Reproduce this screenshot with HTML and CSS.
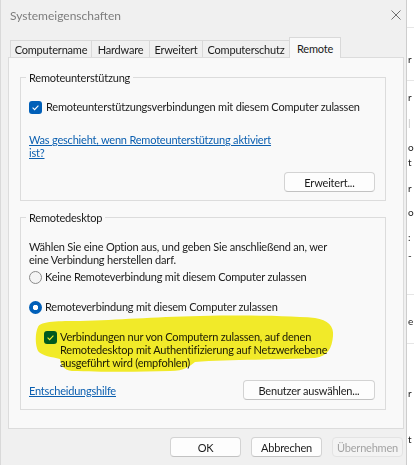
FILE: index.html
```html
<!DOCTYPE html>
<html lang="de">
<head>
<meta charset="utf-8">
<title>Systemeigenschaften</title>
<link rel="stylesheet" href="styles.css">
</head>
<body>
<div class="screen">
  <div class="dialog">
    <div class="titlebar">
      <span class="title">Systemeigenschaften</span>
      <svg class="close" width="10" height="10" viewBox="0 0 10 10"><path d="M0.5 0.5 L9.5 9.5 M9.5 0.5 L0.5 9.5" stroke="#6f6f6f" stroke-width="1" fill="none"/></svg>
    </div>
    <div class="tabs">
      <div class="tab tab-name">Computername</div>
      <div class="tab tab-hw">Hardware</div>
      <div class="tab tab-adv">Erweitert</div>
      <div class="tab tab-prot">Computerschutz</div>
      <div class="tab tab-remote active">Remote</div>
    </div>
    <div class="panel">
      <fieldset class="group group-assist">
        <legend>Remoteunterstützung</legend>
        <div class="option assist-check">
          <svg class="cb" width="13" height="13" viewBox="0 0 13 13"><rect width="13" height="13" rx="3" fill="#005fb8"/><path d="M3.6 6.7 L5.6 8.6 L9.4 4.6" fill="none" stroke="#fff" stroke-width="1.1"/></svg>
          <span>Remoteunterstützungsverbindungen mit diesem Computer zulassen</span>
        </div>
        <a class="link assist-link" href="#">Was geschieht, wenn Remoteunterstützung aktiviert<br>ist?</a>
        <div class="btnrow">
          <button class="btn btn-adv">Erweitert...</button>
        </div>
      </fieldset>
      <fieldset class="group group-desktop">
        <legend>Remotedesktop</legend>
        <p class="intro">Wählen Sie eine Option aus, und geben Sie anschließend an, wer<br>eine Verbindung herstellen darf.</p>
        <div class="option radio-none">
          <span class="radio"></span>
          <span>Keine Remoteverbindung mit diesem Computer zulassen</span>
        </div>
        <div class="option radio-allow">
          <span class="radio checked"></span>
          <span>Remoteverbindung mit diesem Computer zulassen</span>
        </div>
        <div class="option nla">
          <svg class="cb" width="13" height="13" viewBox="0 0 13 13"><rect width="13" height="13" rx="3" fill="#005fb8"/><path d="M3.6 6.7 L5.6 8.6 L9.4 4.6" fill="none" stroke="#fff" stroke-width="1.1"/></svg>
          <span>Verbindungen nur von Computern zulassen, auf denen<br>Remotedesktop mit Authentifizierung auf Netzwerkebene<br>ausgeführt wird (empfohlen)</span>
        </div>
        <div class="actions">
          <a class="link" href="#">Entscheidungshilfe</a>
          <button class="btn btn-users">Benutzer auswählen...</button>
        </div>
      </fieldset>
    </div>
    <div class="footer">
      <button class="btn btn-foot">OK</button>
      <button class="btn btn-foot">Abbrechen</button>
      <button class="btn btn-foot disabled">Übernehmen</button>
    </div>
  </div>
  <div class="strip">
    <div class="strip-line l1"></div>
    <div class="frag f-r1">r</div>
    <div class="strip-line l2"></div>
    <div class="frag f-r2">r</div>
    <div class="frag f-bar">|</div>
    <div class="frag f-o1">o</div>
    <div class="frag f-t1">t</div>
    <div class="frag f-r3">r</div>
    <div class="frag f-o2">o</div>
    <div class="frag f-colon">:</div>
    <div class="frag f-dash">-</div>
    <div class="strip-line l3"></div>
    <div class="frag f-e">e</div>
    <div class="strip-line l4"></div>
    <div class="frag f-r4">r</div>
    <div class="frag f-t2">t</div>
  </div>
  <svg class="highlight" width="414" height="465" viewBox="0 0 414 465">
    <path d="M38,327 C40,321 60,321 80,321 C120,320 150,317 200,316 C250,315 290,316 315,318 C328,320 334,326 333,336 C332,348 328,356 315,358 C280,360 230,359 195,362 C190,366 185,371 170,371 C140,372 100,372 72,371 C64,370 61,366 60,359 C52,357 42,356 38,351 C35,345 35,333 38,327 Z" fill="#f7f02a"/>
  </svg>
</div>
</body>
</html>
```

FILE: styles.css
```css
html, body {
  margin: 0;
  padding: 0;
}

body {
  width: 414px;
  height: 465px;
  overflow: hidden;
  background: #ffffff;
  font-family: Lato, "Noto Sans", sans-serif;
  font-size: 11px;
  letter-spacing: -0.2px;
  color: #1b1b1b;
}

.screen {
  position: relative;
  display: flex;
  width: 414px;
  height: 465px;
}

.dialog {
  flex: none;
  width: 407px;
  height: 465px;
  box-sizing: border-box;
  border-left: 1px solid #d9d9d9;
  border-right: 1px solid #cdcdcd;
  background: #f0f0f0;
  display: flex;
  flex-direction: column;
}

.titlebar {
  height: 30px;
  flex: none;
  display: flex;
  align-items: center;
  justify-content: space-between;
  padding: 0 5px 0 9px;
}

.title {
  font-size: 12px;
  letter-spacing: 0;
  color: #7d7d7d;
}

.close {
  display: block;
}

.tabs {
  height: 27px;
  flex: none;
  display: flex;
  align-items: flex-end;
  padding-left: 9px;
}

.tab {
  box-sizing: border-box;
  height: 17px;
  padding-top: 2px;
  line-height: 13px;
  text-align: center;
  white-space: nowrap;
  border: 1px solid #d9d9d9;
  border-bottom: none;
  margin-right: -1px;
  background: #f0f0f0;
}

.tab-name { width: 82px; }
.tab-hw { width: 59px; }
.tab-adv { width: 54px; }
.tab-prot { width: 88px; }

.tab.active {
  width: 52px;
  height: 21px;
  padding-top: 4px;
  margin-bottom: -1px;
  background: #f9f9f9;
  position: relative;
  z-index: 1;
}

.panel {
  flex: none;
  box-sizing: border-box;
  width: 396px;
  height: 372px;
  margin-left: 7px;
  padding: 13px 0 0 11px;
  border: 1px solid #dcdcdc;
  background: #f9f9f9;
}

.group {
  box-sizing: border-box;
  width: 366px;
  margin: 0;
  padding: 0 10px 8px 8px;
  border: 1px solid #dcdcdc;
  min-width: 0;
}

.group legend {
  padding: 0 3px;
  margin-left: -3px;
  line-height: 13px;
  white-space: nowrap;
}

.group-desktop {
  margin-top: 10px;
  padding-bottom: 9px;
}

.option {
  display: flex;
  align-items: center;
  line-height: 14px;
  white-space: nowrap;
}

.cb {
  flex: none;
  display: block;
  margin-right: 4px;
}

.radio {
  flex: none;
  box-sizing: border-box;
  width: 13px;
  height: 13px;
  margin-right: 3px;
  border-radius: 50%;
  border: 1px solid #8a8a8a;
  background: #f4f4f4;
}

.radio.checked {
  border: none;
  background: radial-gradient(circle, #ffffff 0 2.4px, #005fb8 3px);
}

.assist-check {
  margin-top: 16px;
}

.link {
  color: #0b5fb0;
  text-decoration: underline;
  line-height: 13px;
  white-space: nowrap;
}

.assist-link {
  display: block;
  margin-top: 19px;
}

.btnrow {
  margin-top: 13px;
  display: flex;
  justify-content: flex-end;
}

.btn {
  box-sizing: border-box;
  height: 20px;
  padding: 0;
  border: 1px solid #d3d3d3;
  border-bottom-color: #c2c2c2;
  border-radius: 4px;
  background: #fdfdfd;
  font-family: inherit;
  font-size: 11px;
  letter-spacing: -0.2px;
  color: #1b1b1b;
  white-space: nowrap;
}

.btn-adv { width: 91px; }
.btn-users { width: 132px; }

.intro {
  margin: 16px 0 0 0;
  line-height: 13px;
  white-space: nowrap;
}

.radio-none { margin-top: 4px; }
.radio-allow { margin-top: 16px; }

.nla {
  margin-top: 16px;
  margin-left: 15px;
  align-items: flex-start;
  line-height: 13px;
}

.nla .cb {
  margin-top: 1px;
  margin-right: 3px;
}

.actions {
  margin-top: 11px;
  display: flex;
  align-items: center;
  justify-content: space-between;
}

.footer {
  flex: none;
  display: flex;
  justify-content: flex-end;
  gap: 10px;
  padding: 8px 3px 0 0;
}

.btn-foot { width: 71px; }

.btn.disabled {
  background: #f3f3f3;
  border-color: #e3e3e3;
  color: #a3a3a3;
}

.strip {
  flex: 1;
  height: 465px;
  overflow: hidden;
  background: #ffffff;
  font-size: 10px;
  letter-spacing: 0;
  color: #222;
}

.strip-line {
  border-bottom: 1px solid #e6e6e6;
}

.frag {
  height: 14px;
  line-height: 14px;
  padding-left: 1px;
}

.l1 { height: 27px; }
.f-r1 { margin-top: 24px; }
.l2 { height: 14px; }
.f-r2 { margin-top: 9px; }
.f-bar { margin-top: 11px; color: #bbb; }
.f-o1 { margin-top: 11px; }
.f-t1 { margin-top: 1px; }
.f-r3 { margin-top: 12px; }
.f-o2 { margin-top: 10px; }
.f-colon { margin-top: 11px; }
.f-dash { margin-top: 4px; }
.l3 { height: 32px; }
.f-e { margin-top: 19px; }
.l4 { height: 15px; }
.f-r4 { margin-top: 42px; }
.f-t2 { margin-top: 32px; }

.highlight {
  position: absolute;
  left: 0;
  top: 0;
  pointer-events: none;
  mix-blend-mode: multiply;
}
```
